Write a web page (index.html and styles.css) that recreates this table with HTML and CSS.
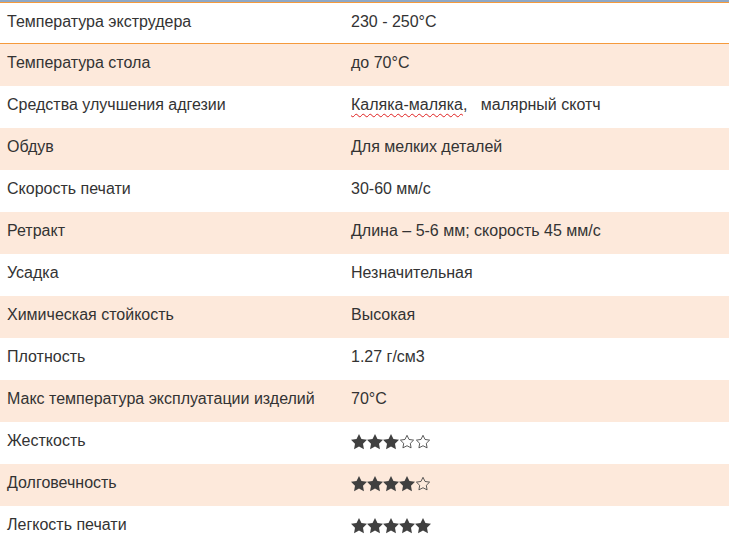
FILE: index.html
```html
<!DOCTYPE html>
<html lang="ru">
<head>
<meta charset="utf-8">
<link rel="stylesheet" href="styles.css">
</head>
<body>
<svg class="defs" width="0" height="0" aria-hidden="true">
  <defs>
    <path id="star" d="M12 1.5l3.09 6.26L22 8.77l-5 4.87 1.18 6.88L12 17.27l-6.18 3.25L7 13.64 2 8.77l6.91-1.01z"/>
  </defs>
</svg>
<div class="topbar"></div>
<table class="specs">
  <tr class="first"><td class="k">Температура экструдера</td><td class="v">230 - 250°C</td></tr>
  <tr class="alt"><td class="k">Температура стола</td><td class="v">до 70°C</td></tr>
  <tr><td class="k">Средства улучшения адгезии</td><td class="v"><span class="typo">Каляка-маляка</span>,&nbsp;&nbsp; малярный скотч</td></tr>
  <tr class="alt"><td class="k">Обдув</td><td class="v">Для мелких деталей</td></tr>
  <tr><td class="k">Скорость печати</td><td class="v">30-60 мм/с</td></tr>
  <tr class="alt"><td class="k">Ретракт</td><td class="v">Длина – 5-6 мм; скорость 45 мм/с</td></tr>
  <tr><td class="k">Усадка</td><td class="v">Незначительная</td></tr>
  <tr class="alt"><td class="k">Химическая стойкость</td><td class="v">Высокая</td></tr>
  <tr><td class="k">Плотность</td><td class="v">1.27 г/см3</td></tr>
  <tr class="alt"><td class="k">Макс температура эксплуатации изделий</td><td class="v">70°C</td></tr>
  <tr><td class="k">Жесткость</td><td class="v"><span class="stars">
    <svg class="s full" viewBox="2 1.5 20 19"><use href="#star"/></svg><svg class="s full" viewBox="2 1.5 20 19"><use href="#star"/></svg><svg class="s full" viewBox="2 1.5 20 19"><use href="#star"/></svg><svg class="s empty" viewBox="0 -0.5 24 23"><use href="#star"/></svg><svg class="s empty" viewBox="0 -0.5 24 23"><use href="#star"/></svg>
  </span></td></tr>
  <tr class="alt"><td class="k">Долговечность</td><td class="v"><span class="stars">
    <svg class="s full" viewBox="2 1.5 20 19"><use href="#star"/></svg><svg class="s full" viewBox="2 1.5 20 19"><use href="#star"/></svg><svg class="s full" viewBox="2 1.5 20 19"><use href="#star"/></svg><svg class="s full" viewBox="2 1.5 20 19"><use href="#star"/></svg><svg class="s empty" viewBox="0 -0.5 24 23"><use href="#star"/></svg>
  </span></td></tr>
  <tr><td class="k">Легкость печати</td><td class="v"><span class="stars">
    <svg class="s full" viewBox="2 1.5 20 19"><use href="#star"/></svg><svg class="s full" viewBox="2 1.5 20 19"><use href="#star"/></svg><svg class="s full" viewBox="2 1.5 20 19"><use href="#star"/></svg><svg class="s full" viewBox="2 1.5 20 19"><use href="#star"/></svg><svg class="s full" viewBox="2 1.5 20 19"><use href="#star"/></svg>
  </span></td></tr>
</table>
</body>
</html>
```
FILE: styles.css
```css
html, body {
  margin: 0;
  padding: 0;
  background: #ffffff;
}
body {
  font-family: "Liberation Sans", Arial, sans-serif;
  font-size: 16px;
  color: #333333;
  overflow: hidden;
}
.defs {
  position: absolute;
  width: 0;
  height: 0;
}
.topbar {
  height: 2px;
  background: #8ea8c6;
}
.specs {
  width: 100%;
  border-collapse: collapse;
  border-spacing: 0;
}
.specs td {
  height: 42px;
  padding: 0 0 3px 0;
  box-sizing: border-box;
  vertical-align: middle;
  white-space: nowrap;
}
.specs tr.first td {
  height: 41px;
  border-top: 1px solid #f59a3c;
  border-bottom: 1px solid #f59a3c;
}
.specs tr.alt td {
  background: #fde9db;
}
.specs td.k {
  width: 351px;
  padding-left: 7px;
}
.specs td.v {
  padding-left: 0;
}
.typo {
  text-decoration: underline wavy #e02020;
  text-decoration-thickness: 1px;
  text-underline-offset: 3px;
}
.stars {
  display: flex;
  align-items: center;
  padding-top: 2px;
}
.s {
  display: block;
  width: 16px;
  height: 15.2px;
}
.s.full {
  fill: #404040;
}
.s.empty {
  fill: none;
  stroke: #404040;
  stroke-width: 1.3;
  stroke-linejoin: miter;
}
```
